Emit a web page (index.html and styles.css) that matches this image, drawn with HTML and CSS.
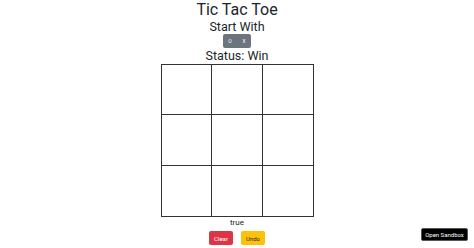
FILE: index.html
```html
<!DOCTYPE html>
<html>
<head>
<meta charset="utf-8">
<link rel="stylesheet" href="styles.css">
</head>
<body>
<div class="app">
  <h1 class="title">Tic Tac Toe</h1>
  <h2 class="subtitle">Start With</h2>
  <div class="toggle">
    <button class="tbtn">O</button><button class="tbtn">X</button>
  </div>
  <h2 class="subtitle">Status: Win</h2>
  <div class="board">
    <div class="cell"></div><div class="cell"></div><div class="cell"></div>
    <div class="cell"></div><div class="cell"></div><div class="cell"></div>
    <div class="cell"></div><div class="cell"></div><div class="cell"></div>
  </div>
  <div class="result">true</div>
  <div class="actions">
    <button class="btn btn-red">Clear</button>
    <button class="btn btn-yellow">Undo</button>
  </div>
</div>
<button class="sandbox">Open Sandbox</button>
</body>
</html>
```
FILE: styles.css
```css
* { box-sizing: border-box; }
body {
  margin: 0;
  font-family: Roboto, "Liberation Sans", sans-serif;
  color: #212529;
  background: #fff;
}
.app {
  display: flex;
  flex-direction: column;
  align-items: center;
}
.title {
  margin: 0;
  font-weight: 400;
  font-size: 16px;
  line-height: 19px;
}
.subtitle {
  margin: 0;
  font-weight: 400;
  font-size: 12.5px;
  line-height: 15px;
}
.toggle {
  display: flex;
  margin: 0;
  height: 14px;
}
.tbtn {
  border: none;
  background: #6c757d;
  color: #fff;
  font-family: inherit;
  font-size: 5px;
  width: 14px;
  height: 14px;
  padding: 0;
}
.tbtn:first-child { border-radius: 2px 0 0 2px; }
.tbtn:last-child { border-radius: 0 2px 2px 0; }
.board {
  display: grid;
  width: 153px;
  height: 153px;
  grid-template-columns: 50px 51px 50px;
  grid-template-rows: 50px 51px 50px;
  border: 1px solid #333;
  margin-top: 1px;
}
.cell {
  border-right: 1px solid #333;
  border-bottom: 1px solid #333;
}
.cell:nth-child(3n) { border-right: none; }
.cell:nth-child(n+7) { border-bottom: none; }
.result {
  font-size: 8px;
  line-height: 10px;
  margin-top: 1px;
}
.actions {
  display: flex;
  gap: 8px;
  margin-top: 3px;
}
.btn {
  border: none;
  border-radius: 2px;
  font-family: inherit;
  font-size: 6px;
  height: 14px;
  width: 24px;
  padding: 0;
}
.btn-red { background: #dc3545; color: #fff; }
.btn-yellow { background: #ffc107; color: #212529; }
.sandbox {
  position: fixed;
  right: 6px;
  bottom: 7px;
  background: #000;
  color: #fff;
  border: 1px solid #555;
  border-radius: 2px;
  font-family: inherit;
  font-size: 6px;
  height: 13px;
  width: 47px;
  padding: 0;
  white-space: nowrap;
}
```
